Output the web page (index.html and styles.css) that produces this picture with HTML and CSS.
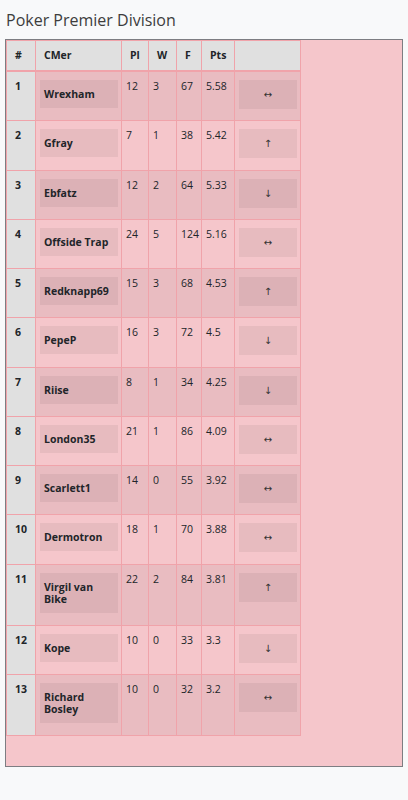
FILE: index.html
```html
<!DOCTYPE html>
<html lang="en">
<head>
<meta charset="utf-8">
<title>Poker Premier Division</title>
<link rel="stylesheet" href="styles.css">
</head>
<body>
<h1 class="title">Poker Premier Division</h1>
<div class="panel">
  <table class="league">
    <colgroup>
      <col class="c-pos"><col class="c-name"><col class="c-pl"><col class="c-w"><col class="c-f"><col class="c-pts"><col class="c-move">
    </colgroup>
    <thead>
      <tr><th>#</th><th>CMer</th><th>Pl</th><th>W</th><th>F</th><th>Pts</th><th></th></tr>
    </thead>
    <tbody>
      <tr><th>1</th><td><div class="name">Wrexham</div></td><td>12</td><td>3</td><td>67</td><td>5.58</td><td><div class="move">↔</div></td></tr>
      <tr><th>2</th><td><div class="name">Gfray</div></td><td>7</td><td>1</td><td>38</td><td>5.42</td><td><div class="move">↑</div></td></tr>
      <tr><th>3</th><td><div class="name">Ebfatz</div></td><td>12</td><td>2</td><td>64</td><td>5.33</td><td><div class="move">↓</div></td></tr>
      <tr><th>4</th><td><div class="name">Offside Trap</div></td><td>24</td><td>5</td><td>124</td><td>5.16</td><td><div class="move">↔</div></td></tr>
      <tr><th>5</th><td><div class="name">Redknapp69</div></td><td>15</td><td>3</td><td>68</td><td>4.53</td><td><div class="move">↑</div></td></tr>
      <tr><th>6</th><td><div class="name">PepeP</div></td><td>16</td><td>3</td><td>72</td><td>4.5</td><td><div class="move">↓</div></td></tr>
      <tr><th>7</th><td><div class="name">Riise</div></td><td>8</td><td>1</td><td>34</td><td>4.25</td><td><div class="move">↓</div></td></tr>
      <tr><th>8</th><td><div class="name">London35</div></td><td>21</td><td>1</td><td>86</td><td>4.09</td><td><div class="move">↔</div></td></tr>
      <tr><th>9</th><td><div class="name">Scarlett1</div></td><td>14</td><td>0</td><td>55</td><td>3.92</td><td><div class="move">↔</div></td></tr>
      <tr><th>10</th><td><div class="name">Dermotron</div></td><td>18</td><td>1</td><td>70</td><td>3.88</td><td><div class="move">↔</div></td></tr>
      <tr><th>11</th><td><div class="name">Virgil van Bike</div></td><td>22</td><td>2</td><td>84</td><td>3.81</td><td><div class="move">↑</div></td></tr>
      <tr><th>12</th><td><div class="name">Kope</div></td><td>10</td><td>0</td><td>33</td><td>3.3</td><td><div class="move">↓</div></td></tr>
      <tr><th>13</th><td><div class="name">Richard Bosley</div></td><td>10</td><td>0</td><td>32</td><td>3.2</td><td><div class="move">↔</div></td></tr>
    </tbody>
  </table>
</div>
</body>
</html>
```
FILE: styles.css
```css
html, body {
  margin: 0;
  padding: 0;
  background: #f8f9fa;
}
body {
  padding: 0 5px;
  font-family: "Open Sans", "Noto Sans", "Liberation Sans", sans-serif;
  color: #212529;
}
.title {
  margin: 0;
  padding: 9px 0 8px 1px;
  font-size: 16px;
  line-height: 22px;
  font-weight: 400;
  color: #3d3d3d;
}
.panel {
  border: 1px solid #7d7d82;
  background: #f5c6cb;
  padding-bottom: 30px;
}
.league {
  border-collapse: collapse;
  table-layout: fixed;
  width: 294px;
  font-size: 10.5px;
}
.c-pos { width: 29px; }
.c-name { width: 86px; }
.c-pl { width: 27px; }
.c-w { width: 28px; }
.c-f { width: 25px; }
.c-pts { width: 33px; }
.c-move { width: 66px; }

.league th, .league td {
  border: 1px solid #f0a3aa;
  vertical-align: top;
  text-align: left;
}
.league thead th {
  background: #e0e0e0;
  font-weight: 700;
  padding: 8px 8px;
  line-height: 13px;
  vertical-align: middle;
  border-bottom-width: 2px;
}
.league tbody th {
  background: #e0e0e0;
  font-weight: 700;
  padding: 8px 8px;
  line-height: 13px;
}
.league tbody td {
  padding: 8px 3px 4px 4px;
  line-height: 13px;
  font-weight: 400;
}
.league tbody tr:nth-child(odd) td {
  background: #e9bcc1;
}
.name {
  background: rgba(0, 0, 0, 0.055);
  padding: 8px 4px;
  line-height: 12px;
  font-weight: 700;
  color: #212529;
  margin-bottom: 8.25px;
}
.move {
  background: rgba(0, 0, 0, 0.055);
  height: 29px;
  line-height: 29px;
  text-align: center;
  font-family: "DejaVu Sans", "Noto Sans", sans-serif;
  font-size: 10px;
  color: #333;
  margin-bottom: 7px;
}
```
